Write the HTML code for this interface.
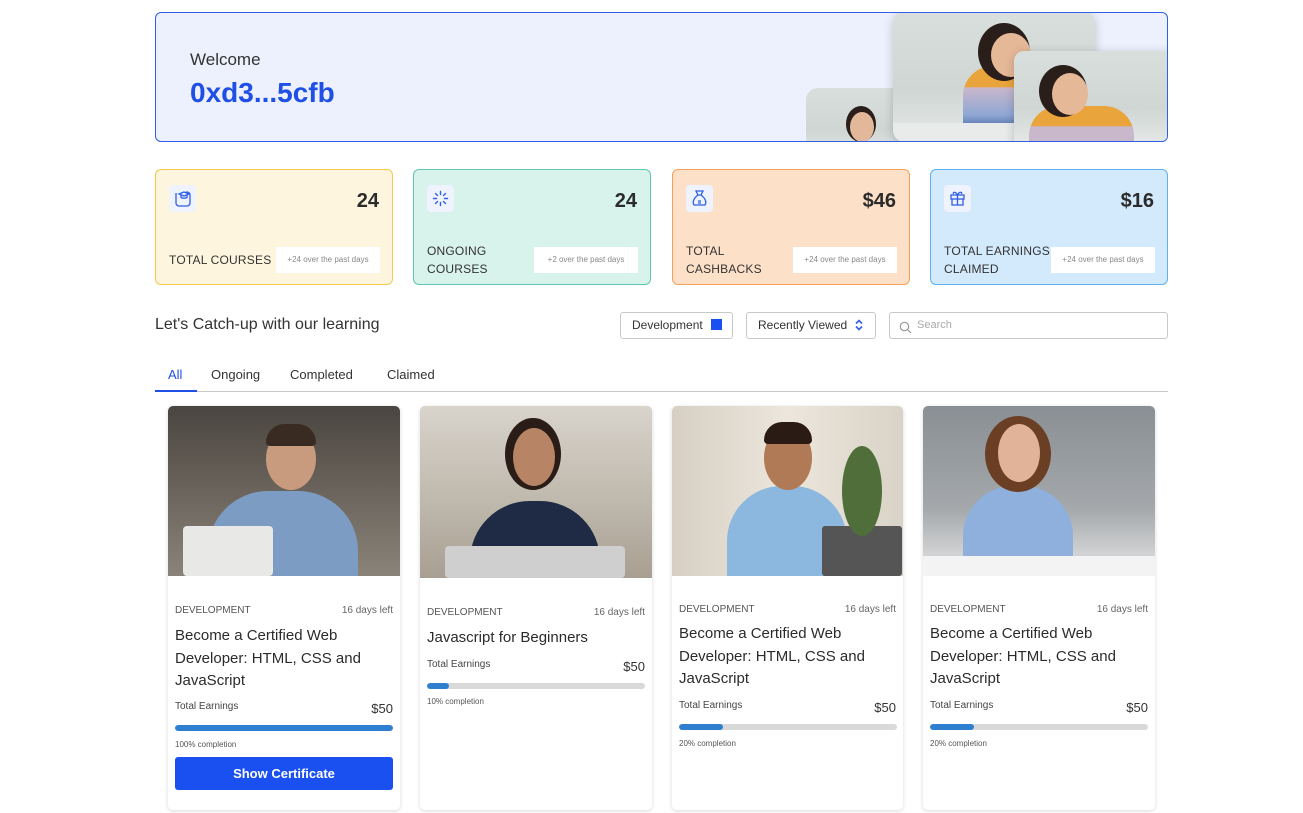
<!DOCTYPE html>
<html><head><meta charset="utf-8"><style>
*{box-sizing:border-box;margin:0;padding:0}
body{width:1303px;height:813px;overflow:hidden;background:#fff;font-family:"Liberation Sans",sans-serif;color:#2b2b2b;position:relative}
.a{position:absolute}
.hero{left:155px;top:12px;width:1013px;height:130px;border:1px solid #2f5fe6;border-radius:6px;background:#ecf1fd;overflow:hidden}
.ph{position:absolute;overflow:hidden;border-radius:12px;background:linear-gradient(180deg,#d9dfdc 0%,#cfd6d3 60%,#e6e9e8 100%)}
.stat{position:absolute;top:169px;width:238px;height:116px;border-radius:6px;border:1px solid}
.ic{position:absolute;left:13px;top:15px;width:27px;height:27px;background:#eef3fd;border-radius:4px}
.num{position:absolute;right:13px;top:20px;font-size:20px;font-weight:bold;color:#2b2b2b}
.lbl{position:absolute;left:13px;font-size:12px;line-height:18px;color:#333;letter-spacing:.2px}
.tag{position:absolute;right:12px;top:77px;width:104px;height:26px;background:#fff;font-size:8px;color:#888;text-align:center;line-height:26px}
.btn{position:absolute;top:312px;height:27px;border:1px solid #c8c8c8;border-radius:3px;font-size:12px;line-height:25px;color:#333}
.card{position:absolute;top:406px;width:232px;height:404px;background:#fff;border-radius:5px;box-shadow:0 1px 4px rgba(0,0,0,.15);overflow:hidden}
.img{position:absolute;left:0;top:0;width:232px;height:170px;overflow:hidden}
.cat{position:absolute;left:7px;font-size:10px;color:#555}
.days{position:absolute;right:7px;font-size:10px;color:#666}
.title{position:absolute;left:7px;width:220px;font-size:15px;line-height:22.5px;color:#2b2b2b}
.te{position:absolute;left:7px;font-size:10px;color:#444}
.amt{position:absolute;right:7px;font-size:13px;color:#333}
.bar{position:absolute;left:7px;width:218px;height:6px;border-radius:3px;background:#d9d9d9;overflow:hidden}
.bar i{display:block;height:6px;background:#2f7fd1;border-radius:3px}
.comp{position:absolute;left:7px;font-size:8px;color:#555}
</style></head><body>

<div class="a hero">
  <div class="a" style="left:34px;top:37px;font-size:17px;color:#333">Welcome</div>
  <div class="a" style="left:34px;top:64px;font-size:28px;font-weight:bold;color:#1f4fe6">0xd3...5cfb</div>
  <div class="ph" style="left:650px;top:75px;width:110px;height:70px">
    <div class="a" style="left:40px;top:18px;width:30px;height:36px;border-radius:50%;background:#2a1e1a"></div>
    <div class="a" style="left:44px;top:24px;width:24px;height:30px;border-radius:50%;background:#e2b79a"></div>
  </div>
  <div class="ph" style="left:737px;top:-2px;width:202px;height:131px;box-shadow:0 2px 10px rgba(0,0,0,.2)">
    <div class="a" style="left:70px;top:55px;width:100px;height:70px;border-radius:30px 30px 0 0;background:linear-gradient(180deg,#e9a43b 0%,#e9a43b 30%,#c9b7cc 31%,#8fa7d4 70%,#2f4c8f 100%)"></div>
    <div class="a" style="left:85px;top:12px;width:52px;height:58px;border-radius:50%;background:#2a1e1a"></div>
    <div class="a" style="left:98px;top:22px;width:40px;height:44px;border-radius:50%;background:#e5b898"></div>
    <div class="a" style="left:0;top:112px;width:202px;height:19px;background:#e8ebea"></div>
  </div>
  <div class="ph" style="left:858px;top:38px;width:160px;height:95px;border-radius:10px 0 0 0;box-shadow:0 2px 10px rgba(0,0,0,.2)">
    <div class="a" style="left:15px;top:55px;width:105px;height:50px;border-radius:30px 30px 0 0;background:linear-gradient(180deg,#e9a43b 0%,#e9a43b 40%,#c9b7cc 41%)"></div>
    <div class="a" style="left:25px;top:14px;width:48px;height:52px;border-radius:50%;background:#2a1e1a"></div>
    <div class="a" style="left:38px;top:22px;width:36px;height:42px;border-radius:50%;background:#e5b898"></div>
  </div>
</div>

<div class="stat" style="left:155px;background:#fdf5dd;border-color:#f2c94c">
  <div class="ic"><svg width="27" height="27" viewBox="0 0 27 27" fill="none" stroke="#2f5fe6" stroke-width="1.3"><path d="M7 8v10a3 3 0 0 0 3 3h8a3 3 0 0 0 3-3V10a3 3 0 0 0-3-3h-1"/><path d="M10 9l5-2 5 2-5 2z"/><path d="M12 10v2.5c2 1 4 1 6 0V10"/></svg></div>
  <div class="num">24</div>
  <div class="lbl" style="top:81px">TOTAL COURSES</div>
  <div class="tag">+24 over the past days</div>
</div>
<div class="stat" style="left:413px;background:#d8f2ec;border-color:#5fc6b0">
  <div class="ic"><svg width="27" height="27" viewBox="0 0 27 27" stroke="#2f5fe6" stroke-width="1.4" stroke-linecap="round"><path d="M13.5 6.5v3M13.5 17.5v3M6.5 13.5h3M17.5 13.5h3M8.5 8.5l2 2M16.5 16.5l2 2M8.5 18.5l2-2M16.5 10.5l2-2"/></svg></div>
  <div class="num">24</div>
  <div class="lbl" style="top:72px">ONGOING<br>COURSES</div>
  <div class="tag">+2 over the past days</div>
</div>
<div class="stat" style="left:672px;background:#fde0c8;border-color:#f5a05a">
  <div class="ic"><svg width="27" height="27" viewBox="0 0 27 27" fill="none" stroke="#2f5fe6" stroke-width="1.3"><path d="M10 6h7l-2 4h-3z"/><path d="M12 10c-4 3-6 7-4 10h11c2-3 0-7-4-10"/><path d="M12 16h3M12 18h3"/></svg></div>
  <div class="num">$46</div>
  <div class="lbl" style="top:72px">TOTAL<br>CASHBACKS</div>
  <div class="tag">+24 over the past days</div>
</div>
<div class="stat" style="left:930px;background:#d3eafd;border-color:#5fb0f0">
  <div class="ic"><svg width="27" height="27" viewBox="0 0 27 27" fill="none" stroke="#2f5fe6" stroke-width="1.3"><rect x="7" y="10" width="13" height="4"/><path d="M8 14v6h11v-6M13.5 10v10M13.5 10c-2-4-5-3-4-1M13.5 10c2-4 5-3 4-1"/></svg></div>
  <div class="num">$16</div>
  <div class="lbl" style="top:72px">TOTAL EARNINGS<br>CLAIMED</div>
  <div class="tag">+24 over the past days</div>
</div>

<div class="a" style="left:155px;top:316px;font-size:16px;color:#333">Let's Catch-up with our learning</div>
<div class="btn" style="left:620px;width:113px;padding-left:11px">Development <span style="display:inline-block;width:11px;height:11px;background:#1a4ff0;vertical-align:-1px;margin-left:5px"></span></div>
<div class="btn" style="left:746px;width:130px;padding-left:11px">Recently Viewed <svg width="10" height="12" viewBox="0 0 10 12" style="vertical-align:-2px;margin-left:3px" fill="none" stroke="#2f5fe6" stroke-width="1.6"><path d="M2 4.5l3-3 3 3M2 7.5l3 3 3-3"/></svg></div>
<div class="btn" style="left:889px;width:279px;padding-left:27px;color:#aaa;font-size:11px">Search<svg class="a" style="left:9px;top:8px" width="13" height="13" viewBox="0 0 13 13" fill="none" stroke="#999" stroke-width="1.2"><circle cx="5.5" cy="5.5" r="4.2"/><path d="M8.5 8.5l3.5 3.5"/></svg></div>

<div class="a" style="left:155px;top:391px;width:1013px;height:1px;background:#c8c8c8"></div>
<div class="a" style="left:155px;top:390px;width:42px;height:2px;background:#1f4fe6"></div>
<div class="a" style="left:168px;top:367px;font-size:13px;color:#1f4fe6">All</div>
<div class="a" style="left:211px;top:367px;font-size:13px;color:#333">Ongoing</div>
<div class="a" style="left:290px;top:367px;font-size:13px;color:#333">Completed</div>
<div class="a" style="left:387px;top:367px;font-size:13px;color:#333">Claimed</div>

<!-- card 1 -->
<div class="card" style="left:168px">
  <div class="img" style="background:linear-gradient(180deg,#4a4540 0%,#6b645c 50%,#8a8379 100%)">
    <div class="a" style="left:40px;top:85px;width:150px;height:90px;border-radius:60px 60px 0 0;background:#7d9cc4"></div>
    <div class="a" style="left:98px;top:22px;width:50px;height:62px;border-radius:50%;background:#c99b7e"></div>
    <div class="a" style="left:98px;top:18px;width:50px;height:22px;border-radius:25px 25px 5px 5px;background:#3a2b22"></div>
    <div class="a" style="left:15px;top:120px;width:90px;height:50px;background:#e8e8e6;border-radius:4px"></div>
  </div>
  <div class="cat" style="top:199px">DEVELOPMENT</div><div class="days" style="top:199px">16 days left</div>
  <div class="title" style="top:219px">Become a Certified Web Developer: HTML, CSS and JavaScript</div>
  <div class="te" style="top:295px">Total Earnings</div><div class="amt" style="top:295px">$50</div>
  <div class="bar" style="top:319px"><i style="width:100%"></i></div>
  <div class="comp" style="top:334px">100% completion</div>
  <div class="a" style="left:7px;top:351px;width:218px;height:33px;background:#1a4ff0;border-radius:3px;color:#fff;font-weight:bold;font-size:13px;text-align:center;line-height:33px">Show Certificate</div>
</div>
<!-- card 2 -->
<div class="card" style="left:420px">
  <div class="img" style="height:172px;background:linear-gradient(180deg,#d8d4cc 0%,#bdb6aa 60%,#a89f92 100%)">
    <div class="a" style="left:50px;top:95px;width:130px;height:80px;border-radius:60px 60px 0 0;background:#1f2a44"></div>
    <div class="a" style="left:85px;top:12px;width:56px;height:72px;border-radius:50%;background:#2a1c16"></div>
    <div class="a" style="left:93px;top:22px;width:42px;height:58px;border-radius:50%;background:#b88466"></div>
    <div class="a" style="left:25px;top:140px;width:180px;height:32px;background:#cfcfcf;border-radius:4px"></div>
  </div>
  <div class="cat" style="top:201px">DEVELOPMENT</div><div class="days" style="top:201px">16 days left</div>
  <div class="title" style="top:221px">Javascript for Beginners</div>
  <div class="te" style="top:253px">Total Earnings</div><div class="amt" style="top:253px">$50</div>
  <div class="bar" style="top:277px"><i style="width:10%"></i></div>
  <div class="comp" style="top:291px">10% completion</div>
</div>
<!-- card 3 -->
<div class="card" style="left:672px;width:231px">
  <div class="img" style="background:linear-gradient(90deg,#d7cfc4 0%,#ece6dc 50%,#d9d2c6 100%)">
    <div class="a" style="left:55px;top:80px;width:120px;height:95px;border-radius:55px 55px 0 0;background:#8cb8df"></div>
    <div class="a" style="left:92px;top:20px;width:48px;height:64px;border-radius:50%;background:#b07a56"></div>
    <div class="a" style="left:92px;top:16px;width:48px;height:22px;border-radius:24px 24px 5px 5px;background:#2a1c14"></div>
    <div class="a" style="left:150px;top:120px;width:80px;height:50px;background:#555;border-radius:3px"></div>
    <div class="a" style="left:170px;top:40px;width:40px;height:90px;border-radius:50%;background:#4f6e3a"></div>
  </div>
  <div class="cat" style="top:198px">DEVELOPMENT</div><div class="days" style="top:198px">16 days left</div>
  <div class="title" style="top:217px">Become a Certified Web Developer: HTML, CSS and JavaScript</div>
  <div class="te" style="top:294px">Total Earnings</div><div class="amt" style="top:294px">$50</div>
  <div class="bar" style="top:318px"><i style="width:20%"></i></div>
  <div class="comp" style="top:333px">20% completion</div>
</div>
<!-- card 4 -->
<div class="card" style="left:923px">
  <div class="img" style="background:linear-gradient(180deg,#8a8f94 0%,#a4a8ab 60%,#e6e6e6 100%)">
    <div class="a" style="left:40px;top:80px;width:110px;height:80px;border-radius:50px 50px 0 0;background:#8fb0dd"></div>
    <div class="a" style="left:62px;top:10px;width:66px;height:76px;border-radius:50%;background:#6a3f24"></div>
    <div class="a" style="left:75px;top:18px;width:42px;height:58px;border-radius:50%;background:#e1b49a"></div>
    <div class="a" style="left:0;top:150px;width:232px;height:20px;background:#f3f3f3"></div>
  </div>
  <div class="cat" style="top:198px">DEVELOPMENT</div><div class="days" style="top:198px">16 days left</div>
  <div class="title" style="top:217px">Become a Certified Web Developer: HTML, CSS and JavaScript</div>
  <div class="te" style="top:294px">Total Earnings</div><div class="amt" style="top:294px">$50</div>
  <div class="bar" style="top:318px"><i style="width:20%"></i></div>
  <div class="comp" style="top:333px">20% completion</div>
</div>
</body></html>
